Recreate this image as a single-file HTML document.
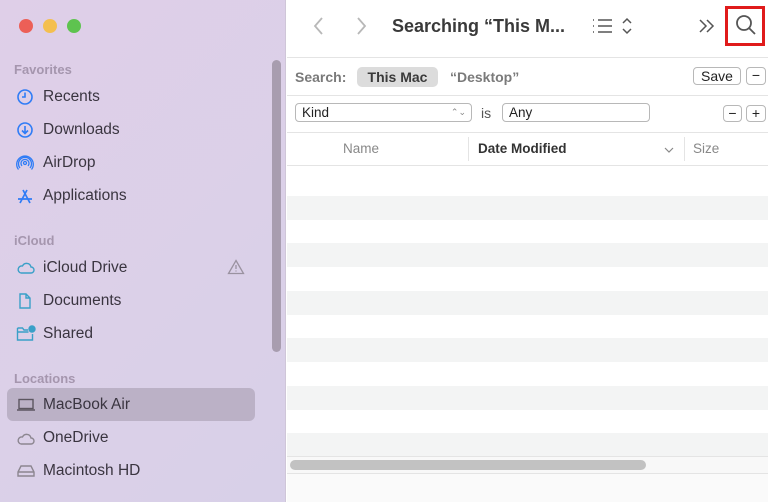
<!DOCTYPE html>
<html><head><style>
*{margin:0;padding:0;box-sizing:border-box}
body{width:768px;height:502px;overflow:hidden;font-family:"Liberation Sans",sans-serif;position:relative;background:#fff}
.sb{position:absolute;left:0;top:0;width:286px;height:502px;background:linear-gradient(135deg,#dfcfe8,#d8d0e8);border-right:1px solid #cfc6d8}
.dot{position:absolute;top:19px;width:14px;height:14px;border-radius:50%}
.sec{position:absolute;left:14px;font-size:13px;font-weight:bold;color:#a596ae}
.it{position:absolute;left:43px;font-size:15.5px;color:#3a3540}
.ic{position:absolute;left:16px}
.main{position:absolute;left:287px;top:0;right:0;bottom:0}
.hl{position:absolute;left:0;right:0;height:1px;background:#e4e4e4}
.stripe{position:absolute;left:0;right:0;height:24px;background:#f3f4f4}
.btn{position:absolute;border:1px solid #b8b8b8;border-radius:4px;background:#fff;font-size:14px;color:#222}
</style></head><body>
<div class="sb">
<div class="dot" style="left:19px;background:#ec5f57"></div>
<div class="dot" style="left:43px;background:#f4bf4f"></div>
<div class="dot" style="left:67px;background:#5ec34f"></div>
<div style="position:absolute;left:272px;top:60px;width:9px;height:292px;border-radius:5px;background:#a89daf"></div>
<div class="sec" style="top:62px">Favorites</div>
<svg class="ic" style="top:88px" width="18" height="18" viewBox="0 0 18 18" fill="none" stroke="#2f7cf6" stroke-width="1.6"><circle cx="9" cy="9" r="7"/><path d="M9 4.5V9H6"/></svg>
<div class="it" style="top:88px">Recents</div>
<svg class="ic" style="top:121px" width="18" height="18" viewBox="0 0 18 18" fill="none" stroke="#2f7cf6" stroke-width="1.6"><circle cx="9" cy="9" r="7"/><path d="M9 5v7M6 9.5l3 3 3-3"/></svg>
<div class="it" style="top:121px">Downloads</div>
<svg class="ic" style="top:154px" width="18" height="18" viewBox="0 0 18 18" fill="none" stroke="#2f7cf6" stroke-width="1.3"><circle cx="9" cy="9" r="1.5"/><path d="M6 12a4 4 0 1 1 6 0M4 14a6.5 6.5 0 1 1 10 0M2.5 15.5a8.3 8.3 0 1 1 13 0"/></svg>
<div class="it" style="top:154px">AirDrop</div>
<svg class="ic" style="top:187px" width="18" height="18" viewBox="0 0 18 18" fill="none" stroke="#2f7cf6" stroke-width="1.7"><path d="M7 3l7 13M11 3L4 16M2 12h14"/></svg>
<div class="it" style="top:187px">Applications</div>
<div class="sec" style="top:233px">iCloud</div>
<svg class="ic" style="top:259px" width="20" height="18" viewBox="0 0 20 18" fill="none" stroke="#3aa0c8" stroke-width="1.4"><path d="M5 14h10a3 3 0 0 0 0-6 4.5 4.5 0 0 0-8.5-1A3.5 3.5 0 0 0 5 14z"/></svg>
<div class="it" style="top:259px">iCloud Drive</div>
<svg style="position:absolute;left:227px;top:259px" width="18" height="16" viewBox="0 0 18 16" fill="none" stroke="#9a92a0" stroke-width="1.3"><path d="M9 1.5L16.5 14.5H1.5z"/><path d="M9 6v4M9 11.5v1"/></svg>
<svg class="ic" style="top:292px" width="18" height="18" viewBox="0 0 18 18" fill="none" stroke="#3aa0c8" stroke-width="1.4"><path d="M4 2h6l4 4v10H4zM10 2v4h4"/></svg>
<div class="it" style="top:292px">Documents</div>
<svg class="ic" style="top:325px" width="20" height="18" viewBox="0 0 20 18" fill="none" stroke="#3aa0c8" stroke-width="1.4"><path d="M1.5 3h5l1.5 2h4M1.5 3v12h15v-6M1.5 7h11"/><circle cx="16" cy="4" r="3" fill="#3aa0c8"/></svg>
<div class="it" style="top:325px">Shared</div>
<div class="sec" style="top:371px">Locations</div>
<div style="position:absolute;left:7px;top:388px;width:248px;height:33px;border-radius:6px;background:#bbb1c6"></div>
<svg class="ic" style="top:397px" width="20" height="16" viewBox="0 0 20 16" fill="none" stroke="#5c5660" stroke-width="1.4"><rect x="3" y="2.5" width="14" height="9"/><path d="M1 13h18"/></svg>
<div class="it" style="top:396px">MacBook Air</div>
<svg class="ic" style="top:430px" width="20" height="18" viewBox="0 0 20 18" fill="none" stroke="#8c8690" stroke-width="1.4"><path d="M5 14h10a3 3 0 0 0 0-6 4.5 4.5 0 0 0-8.5-1A3.5 3.5 0 0 0 5 14z"/></svg>
<div class="it" style="top:429px">OneDrive</div>
<svg class="ic" style="top:463px" width="20" height="16" viewBox="0 0 20 16" fill="none" stroke="#8c8690" stroke-width="1.4"><path d="M2 9l3-6h10l3 6v4H2zM2 9h16"/></svg>
<div class="it" style="top:462px">Macintosh HD</div>
</div>
<div class="main">
<svg style="position:absolute;left:25px;top:16px" width="14" height="20" viewBox="0 0 14 20" fill="none" stroke="#b8b8b8" stroke-width="1.8"><path d="M10 2L3 10l7 8"/></svg>
<svg style="position:absolute;left:67px;top:16px" width="14" height="20" viewBox="0 0 14 20" fill="none" stroke="#b8b8b8" stroke-width="1.8"><path d="M4 2l7 8-7 8"/></svg>
<div style="position:absolute;left:105px;top:16px;font-size:18px;font-weight:bold;color:#3a3a3a">Searching “This M...</div>
<svg style="position:absolute;left:305px;top:16px" width="40" height="20" viewBox="0 0 40 20" fill="none" stroke="#555" stroke-width="1.5"><path d="M1 4h1M1 10h1M1 16h1M6 4h14M6 10h14M6 16h14M31 7l4-4 4 4M31 13l4 4 4-4"/></svg>
<svg style="position:absolute;left:411px;top:18px" width="18" height="16" viewBox="0 0 18 16" fill="none" stroke="#555" stroke-width="1.5"><path d="M2 2l6 6-6 6M9 2l6 6-6 6"/></svg>
<div style="position:absolute;left:438px;top:6px;width:40px;height:40px;border:3px solid #e01b1b"></div>
<svg style="position:absolute;left:448px;top:14px" width="22" height="22" viewBox="0 0 22 22" fill="none" stroke="#555" stroke-width="1.8"><circle cx="9" cy="9" r="7"/><path d="M14 14l6 6"/></svg>
<div class="hl" style="top:57px"></div>
<div style="position:absolute;left:8px;top:69px;font-size:14px;font-weight:bold;color:#7a7a7a">Search:</div>
<div style="position:absolute;left:70px;top:67px;width:81px;height:20px;border-radius:5px;background:#dcdcdc;font-size:14px;font-weight:bold;color:#3a3a3a;text-align:center;line-height:20px">This Mac</div>
<div style="position:absolute;left:163px;top:69px;font-size:14px;font-weight:bold;color:#7a7a7a">“Desktop”</div>
<div class="btn" style="left:406px;top:67px;width:48px;height:18px;text-align:center;line-height:16px">Save</div>
<div class="btn" style="left:459px;top:67px;width:20px;height:18px;text-align:center;line-height:15px">−</div>
<div class="hl" style="top:95px"></div>
<div class="btn" style="left:8px;top:103px;width:177px;height:19px;padding-left:6px;line-height:17px;font-size:13.5px">Kind<span style="position:absolute;right:5px;top:0;font-size:9px;color:#888">⌃⌄</span></div>
<div style="position:absolute;left:194px;top:105px;font-size:14px;color:#555">is</div>
<div class="btn" style="left:215px;top:103px;width:148px;height:19px;padding-left:6px;line-height:17px;font-size:13.5px">Any</div>
<div class="btn" style="left:436px;top:105px;width:19px;height:17px;text-align:center;line-height:14px">−</div>
<div class="btn" style="left:459px;top:105px;width:20px;height:17px;text-align:center;line-height:14px">+</div>
<div class="hl" style="top:132px"></div>
<div style="position:absolute;left:56px;top:141px;font-size:13.5px;color:#888">Name</div>
<div style="position:absolute;left:181px;top:137px;width:1px;height:24px;background:#e4e4e4"></div>
<div style="position:absolute;left:191px;top:141px;font-size:13.5px;font-weight:bold;color:#333">Date Modified</div>
<svg style="position:absolute;left:376px;top:146px" width="12" height="8" viewBox="0 0 12 8" fill="none" stroke="#888" stroke-width="1.2"><path d="M2 2l4 4 4-4"/></svg>
<div style="position:absolute;left:397px;top:137px;width:1px;height:24px;background:#e4e4e4"></div>
<div style="position:absolute;left:406px;top:141px;font-size:13.5px;color:#888">Size</div>
<div class="hl" style="top:165px"></div>
<div class="stripe" style="top:196px"></div>
<div class="stripe" style="top:243px"></div>
<div class="stripe" style="top:291px"></div>
<div class="stripe" style="top:338px"></div>
<div class="stripe" style="top:386px"></div>
<div class="stripe" style="top:433px"></div>
<div style="position:absolute;left:0;right:0;top:456px;height:18px;background:#f8f8f8;border-top:1px solid #e4e4e4;border-bottom:1px solid #e4e4e4"></div>
<div style="position:absolute;left:3px;top:460px;width:356px;height:10px;border-radius:5px;background:#c2c2c2"></div>
<div style="position:absolute;left:0;right:0;top:474px;bottom:0;background:#fafafa"></div>
</div>
</body></html>
